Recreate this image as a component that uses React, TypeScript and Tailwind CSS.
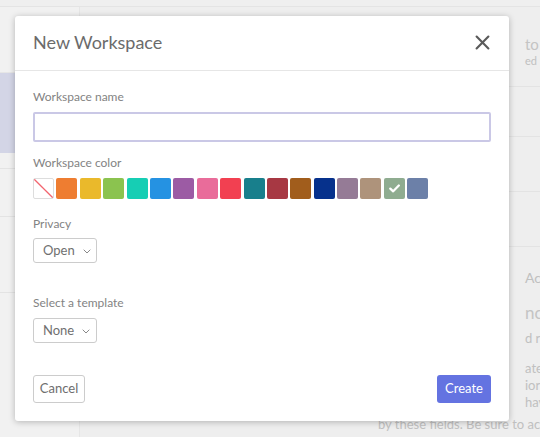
const swatches = [
  "#ee7d31",
  "#eab92b",
  "#8bc34f",
  "#16ceb4",
  "#2592e2",
  "#9c5ba4",
  "#e96c9a",
  "#f24051",
  "#187f8c",
  "#a73843",
  "#a15d1c",
  "#06318c",
  "#957b96",
  "#ae937b",
  "#8fac90",
  "#6c80a8",
];

export default function App() {
  return (
    <div className="relative w-[540px] h-[437px] overflow-hidden bg-[#eeeeee] font-['Lato','Liberation_Sans',sans-serif]">
      {/* page behind the overlay */}
      <div className="h-[7px] border-b border-[#e4e4e4] bg-[#efefef]" />
      <div className="flex h-[430px]">
        <div className="w-[80px] shrink-0 bg-[#f1f1f1] border-r border-[#e6e6e6] flex flex-col">
          <div className="h-[66px] border-b border-[#e6e6e6]" />
          <div className="h-[80px] bg-[#d3d5e6]" />
          <div className="h-[15px]" />
          <div className="h-[49px] border-t border-b border-[#e3e3e3]" />
          <div className="h-[76px] border-b border-[#e3e3e3]" />
        </div>
        <div className="flex-1 flex flex-col text-[#c0c0c0] whitespace-nowrap">
          <div className="pl-[445px] pt-[28px] text-[15px] leading-[18px] text-[#c4c4c4]">to</div>
          <div className="pl-[445px] text-[11px] leading-[16px]">ed</div>
          <div className="h-[18px] border-b border-[#e3e3e3]" />
          <div className="h-[50px] border-b border-[#e3e3e3]" />
          <div className="h-[55px] border-b border-[#e3e3e3]" />
          <div className="h-[55px] border-b border-[#e3e3e3]" />
          <div className="pl-[445px] pt-[22px] text-[14px] leading-[18px]">Ac</div>
          <div className="pl-[445px] pt-[16px] text-[17px] leading-[20px] text-[#c4c4c4]">nc</div>
          <div className="pl-[445px] pt-[6px] text-[13px] leading-[18px]">d r</div>
          <div className="pl-[445px] pt-[12px] text-[13px] leading-[18px]">ate</div>
          <div className="pl-[445px] text-[13px] leading-[17px]">ior</div>
          <div className="pl-[445px] text-[13px] leading-[17px]">hav</div>
          <div className="pl-[298px] pt-[4px] text-[13px] leading-[18px]">by these fields. Be sure to ac</div>
        </div>
      </div>

      {/* modal */}
      <div className="absolute left-[15px] top-[16px] w-[494px] h-[405px] bg-white rounded-[3px] shadow-[0_1px_6px_rgba(0,0,0,0.25)] flex flex-col">
        <div className="h-[55px] border-b border-[#e6e6e6] flex items-center justify-between px-[18px] pb-[2px]">
          <h1 className="text-[18px] text-[#6b6b6b]">New Workspace</h1>
          <svg width="15" height="15" viewBox="0 0 14 14" className="mr-[1px]">
            <path d="M1.5 1.5 L12.5 12.5 M12.5 1.5 L1.5 12.5" stroke="#5a5a5a" strokeWidth="2" strokeLinecap="round" />
          </svg>
        </div>

        <div className="flex flex-col px-[18px] pt-[18px] pb-[18px]">
          <Label>Workspace name</Label>
          <div className="mt-[7px] h-[30px] border-2 border-[#cac8e6] rounded-[2px]" />

          <div className="mt-[13px]">
            <Label>Workspace color</Label>
          </div>
          <div className="mt-[7px] flex gap-[2.4px]">
            <div className="w-[21px] h-[21px] rounded-[2px] border border-[#dddddd] bg-white overflow-hidden">
              <svg width="19" height="19" viewBox="0 0 19 19">
                <path d="M0 0 L19 19" stroke="#f2656f" strokeWidth="1.3" />
              </svg>
            </div>
            {swatches.map((c, i) => (
              <div
                key={c}
                className="w-[21px] h-[21px] rounded-[2px] flex items-center justify-center"
                style={{ backgroundColor: c }}
              >
                {i === 14 && (
                  <svg width="11" height="9" viewBox="0 0 11 9">
                    <path d="M1.3 4.6 L4.2 7.3 L9.8 1.5" stroke="white" strokeWidth="2.3" fill="none" strokeLinecap="round" strokeLinejoin="round" />
                  </svg>
                )}
              </div>
            ))}
          </div>

          <div className="mt-[17px]">
            <Label>Privacy</Label>
          </div>
          <div className="mt-[6px]">
            <Select value="Open" />
          </div>

          <div className="mt-[32px]">
            <Label>Select a template</Label>
          </div>
          <div className="mt-[7px]">
            <Select value="None" />
          </div>

          <div className="mt-[32px] flex justify-between">
            <button className="w-[52px] h-[28px] border border-[#cccccc] rounded-[3px] text-[13px] text-[#6e6e6e] bg-white">
              Cancel
            </button>
            <button className="w-[54px] h-[28px] rounded-[3px] text-[13px] text-white bg-[#6473e1]">
              Create
            </button>
          </div>
        </div>
      </div>
    </div>
  );
}

function Label({ children }: any) {
  return <div className="text-[12px] leading-[16px] text-[#838383]">{children}</div>;
}

function Select({ value }: { value: string }) {
  return (
    <div className="w-[64px] h-[25px] border border-[#cccccc] rounded-[3px] flex items-center pl-[9px] text-[13px] text-[#707070]">
      <span>{value}</span>
      <svg width="8" height="5" viewBox="0 0 8 5" className="ml-[8px] mt-[2px]">
        <path d="M0.7 0.7 L4 4 L7.3 0.7" stroke="#888888" strokeWidth="1" fill="none" />
      </svg>
    </div>
  );
}
